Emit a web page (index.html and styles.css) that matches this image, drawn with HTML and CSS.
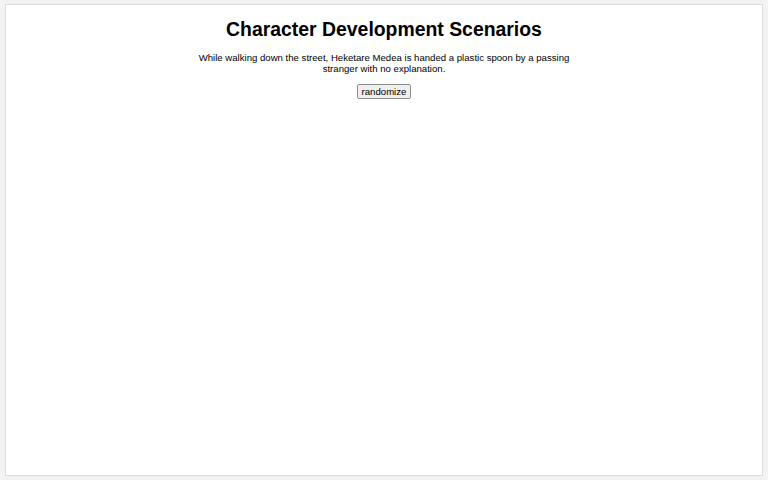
FILE: index.html
```html
<!DOCTYPE html>
<html lang="en">
<head>
  <meta charset="UTF-8">
  <meta name="viewport" content="width=device-width, initial-scale=1.0">
  <title>Character Development Scenarios</title>
  <link rel="stylesheet" href="styles.css">
</head>
<body>
  <div class="page">
    <h1>Character Development Scenarios</h1>
    <p id="scenario" class="scenario">While walking down the street, Heketare Medea is handed a plastic spoon by a passing stranger with no explanation.</p>
    <button id="randomize">randomize</button>
  </div>
</body>
</html>
```

FILE: styles.css
```css
html, body {
  height: 100%;
}

body {
  margin: 0;
  padding: 4px 5px;
  box-sizing: border-box;
  background-color: #f2f2f2;
  font-family: "Liberation Sans", Arial, sans-serif;
  color: #000;
}

.page {
  height: 100%;
  box-sizing: border-box;
  background-color: #fff;
  border: 1px solid #dcdcdc;
  text-align: center;
  padding-top: 13px;
}

h1 {
  font-size: 19.4px;
  margin: 0 0 11px;
}

.scenario {
  font-size: 9.6px;
  line-height: 11px;
  max-width: 385px;
  margin: 0 auto 7px;
}

button {
  font-family: "Liberation Sans", Arial, sans-serif;
  font-size: 9.6px;
  padding: 1px 4px;
  background-color: #efefef;
  border: 1px solid #8f8f8f;
  border-radius: 2px;
}
```
